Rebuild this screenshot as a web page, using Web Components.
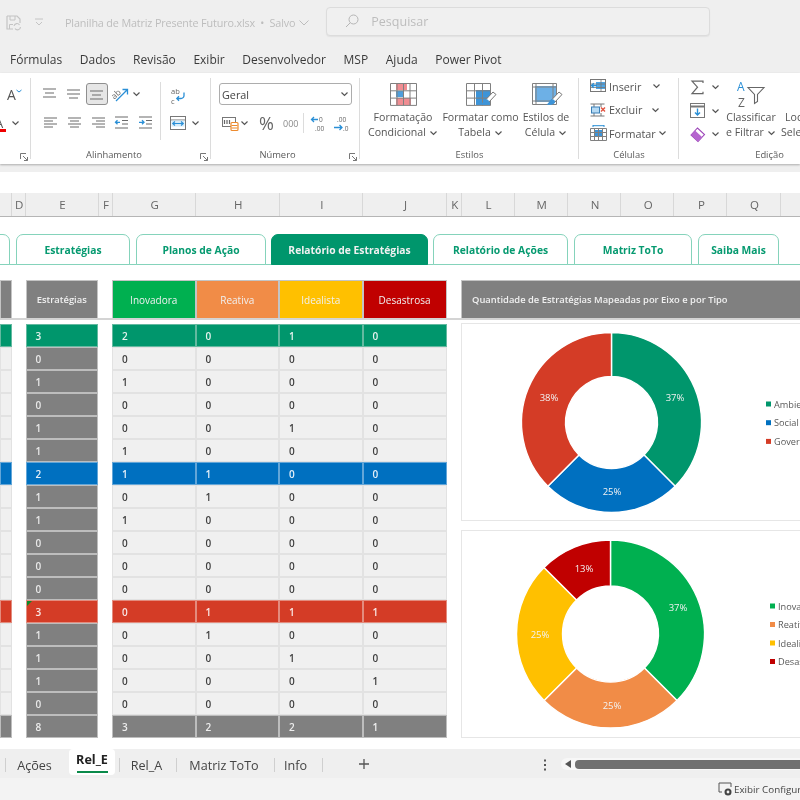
<!DOCTYPE html>
<html lang="pt-BR">
<head>
<meta charset="utf-8">
<title>Planilha de Matriz Presente Futuro</title>
<style>
  html, body { margin: 0; padding: 0; height: 100%; overflow: hidden; background: #efefef; }
  body { font-family: "Open Sans", "Liberation Sans", sans-serif; }
  x-app { --cols: 12px 13.5px 72.5px 14px 83.5px 83.5px 83.5px 84px 14.5px 1fr; }
</style>
</head>
<body>
<x-app></x-app>
<script>
const GR = '#6a6a6a', BL = '#2a8fd6', OR = '#ed8b2f';

// small helper for icons made of horizontal lines
const lines = (list, color = GR) =>
  `<path d="${list.map(l => `M${l[0]} ${l[2]}H${l[1]}`).join('')}" stroke="${color}" stroke-width="1.1" fill="none"/>`;
const svg = (w, h, body) =>
  `<svg width="${w}" height="${h}" viewBox="0 0 ${w} ${h}" overflow="visible" aria-hidden="true" style="flex:none">${body}</svg>`;
const chev = (w = 9) =>
  svg(w, 6, `<path d="M${w / 2 - 3} 1.5l3 3 3-3" stroke="#555" stroke-width="1.2" fill="none"/>`);

const brush = (x, y) => `
  <path d="M${x + 10} ${y - 9}l3 2.5-7.5 8-3-2.5z" fill="#fff" stroke="#777" stroke-width="1"/>
  <path d="M${x + 2} ${y - 1.5}c2.5-.8 4.5 1 4 2.8-1 2.6-5 3.2-8.5 2.2 2.2-.9 2.6-3.4 4.5-5z" fill="#3d94d8"/>`;
const gridLines = (x, y, w, h, cw, rh) => {
  let d = '';
  for (let i = 0; i <= w; i += cw) d += `M${x + i} ${y}v${h}`;
  for (let j = 0; j <= h; j += rh) d += `M${x} ${y + j}h${w}`;
  return `<path d="${d}" stroke="#808080" stroke-width="1" fill="none"/>`;
};

const ICONS = {
  alignTop: svg(16, 14, lines([[1, 14, 2], [3, 12, 6], [1, 14, 10]])),
  alignMid: svg(16, 14, lines([[1, 14, 3], [1, 14, 7], [3, 12, 11]])),
  alignBot: svg(16, 14, lines([[1, 14, 4], [3, 12, 8], [1, 14, 12]])),
  orient: svg(18, 16, `
    <text x="0" y="10" font-size="8.5" font-family="Open Sans" fill="#666" transform="rotate(-42 6 9)">ab</text>
    <path d="M4 15L15 4M10.5 3.5H15.5V8.5" stroke="${BL}" stroke-width="1.3" fill="none"/>`),
  left: svg(16, 14, lines([[2, 15, 2], [2, 11, 5], [2, 15, 8], [2, 11, 11]])),
  center: svg(16, 14, lines([[2, 15, 2], [4, 13, 5], [2, 15, 8], [4, 13, 11]])),
  right: svg(16, 14, lines([[2, 15, 2], [6, 15, 5], [2, 15, 8], [6, 15, 11]])),
  outdent: svg(16, 14, lines([[1, 14, 1], [8, 14, 4.5], [8, 14, 8], [1, 14, 12]]) +
    `<path d="M6 6.3H1.5M3.5 4.3l-2 2 2 2" stroke="${BL}" stroke-width="1.3" fill="none"/>`),
  indent: svg(16, 14, lines([[1, 14, 1], [8, 14, 4.5], [8, 14, 8], [1, 14, 12]]) +
    `<path d="M1 6.3H6M4 4.3l2 2-2 2" stroke="${BL}" stroke-width="1.3" fill="none"/>`),
  wrap: svg(18, 17, `
    <text x="2" y="7.5" font-size="7.5" font-family="Open Sans" fill="#666">ab</text>
    <text x="2" y="17.8" font-size="7.5" font-family="Open Sans" fill="#666">c</text>
    <path d="M15 6.5v3a3 3 0 0 1-3 3H8M10 10.3l-2.2 2.2 2.2 2.2" stroke="${BL}" stroke-width="1.3" fill="none"/>`),
  merge: svg(17, 15, `
    <rect x=".5" y=".5" width="15" height="13" fill="none" stroke="#777"/>
    <path d="M.5 4H15.5" stroke="#777"/><rect x="1.5" y="4.5" width="13" height="6" fill="#d6ebf8"/>
    <path d="M2.5 7.5h11M5 5.5l-2.3 2 2.3 2M11 5.5l2.3 2-2.3 2" stroke="${BL}" stroke-width="1.1" fill="none"/>`),
  acct: svg(17, 15, `
    <rect x=".5" y="1.5" width="13" height="9" fill="#fff" stroke="#777"/>
    <path d="M2.5 4v4M5 4v4M7.5 4v4" stroke="#666" stroke-width="1.2"/>
    <rect x="9" y="6.5" width="7" height="8" rx="1" fill="#fff" stroke="${OR}" stroke-width="1.2"/>
    <path d="M9.5 9.5h6M9.5 12h6" stroke="${OR}"/>`),
  decUp: svg(16, 17, `
    <text x="9" y="7" font-size="6.5" font-family="Open Sans" fill="#666">0</text>
    <text x="5" y="16" font-size="6.5" font-family="Open Sans" fill="#666">.00</text>
    <path d="M8 4.5H1.5M4 2L1.5 4.5 4 7" stroke="${BL}" stroke-width="1.3" fill="none"/>`),
  decDown: svg(16, 17, `
    <text x="4" y="7" font-size="6.5" font-family="Open Sans" fill="#666">.00</text>
    <text x="10" y="16" font-size="6.5" font-family="Open Sans" fill="#666">.0</text>
    <path d="M1 12.5H9M6.5 10L9 12.5 6.5 15" stroke="${BL}" stroke-width="1.3" fill="none"/>`),
  condFmt: svg(27, 23, `
    <rect x="6" y="1" width="11" height="6" fill="#f08d92"/><rect x="6" y="15" width="15" height="7" fill="#f08d92"/>
    <rect x="6" y="8" width="8" height="6" fill="#4e9fdc"/>
    ${gridLines(.5, .5, 26, 22, 6.5, 7.3)}`),
  tableFmt: svg(29, 24, `
    <rect x="10" y="7" width="15" height="15" fill="#3d94d8"/>
    ${gridLines(.5, .5, 24, 22, 8, 7.3)}${brush(17, 18)}`),
  cellFmt: svg(29, 24, `
    <rect x="3" y="3" width="22" height="16" fill="#6db0e6"/>
    <path d="M.5.5h24v21H.5zM.5 4h24M4 .5v21M21 .5v21M.5 18h24" stroke="#808080" fill="none"/>${brush(17, 18)}`),
  insert: svg(17, 14, `
    <rect x=".5" y=".5" width="15" height="12" fill="#fff" stroke="#777"/>
    <rect x="6" y="3" width="9" height="7" fill="#4ea6e6"/>
    <path d="M1 5h14M1 8.5h14M11 1v11" stroke="#777" stroke-width=".8"/>
    <path d="M7 6.5H1.5M3.8 4.2L1.5 6.5l2.3 2.3" stroke="${BL}" stroke-width="1.3" fill="none"/>`),
  del: svg(17, 14, `
    <path d="M.5 1h14M.5 13h14M4 1v12M11 1v3M11 10v3" stroke="#777" fill="none"/>
    <rect x="1.5" y="4" width="8" height="6" fill="#b6daf4" stroke="#3a7fb5"/>
    <path d="M11 4.5l4 4m0-4l-4 4" stroke="#e2533f" stroke-width="1.4"/>`),
  format: svg(17, 16, `
    <path d="M3 .7h11M3 0v2M14 0v2" stroke="${BL}"/>
    <rect x="4" y="5" width="9" height="7" fill="#3d94d8"/>
    ${gridLines(.5, 3.5, 16, 12, 4, 4)}`),
  sum: svg(15, 15, `<path d="M13 3V1.2H2l5.5 6L2 13.6h11V11.8" stroke="#666" stroke-width="1.2" fill="none"/>`),
  fill: svg(16, 15, `
    <rect x=".5" y=".5" width="14" height="14" fill="#fff" stroke="#777"/><path d="M.5 3.5h14" stroke="#777" stroke-width="2"/>
    <path d="M7.5 5.5V12M5 9.5L7.5 12 10 9.5" stroke="${BL}" stroke-width="1.4" fill="none"/>`),
  eraser: svg(16, 15, `
    <path d="M1 8l6.5-7 7 6.5L8 14.5z" fill="#fff" stroke="#9c45b8" stroke-width="1.1"/>
    <path d="M1 8l4-4.5 7 6.5-4 4.5z" fill="#b565cf"/>`),
  sort: svg(28, 26, `
    <text x="0" y="10" font-size="12" font-family="Open Sans" fill="${BL}">A</text>
    <text x="1" y="25.5" font-size="12" font-family="Open Sans" fill="#666">Z</text>
    <path d="M11 6.5h16l-6.5 7v7l-3 2v-9z" fill="#fff" stroke="#666" stroke-width="1.1"/>`),
  launcher: svg(8, 8, `<path d="M.5 6V.5H6M3 3l4.5 4.5M7.5 4v3.5H4" stroke="#777" fill="none"/>`),
};

class XTitlebar extends HTMLElement {
  constructor() {
    super();
    this.attachShadow({ mode: 'open' }).innerHTML = `
      <style>
        :host { display: flex; align-items: center; height: 41px; padding-left: 6px; box-sizing: border-box;
                color: #bdbdbd; font-size: 12px; white-space: nowrap; padding-top: 4px; }
        .qa { margin-left: 13px; line-height: 0; }
        .name { margin-left: 22px; font-size: 10.8px; letter-spacing: -.15px; }
        .dn { margin-left: 4px; line-height: 0; }
        .search { margin-left: 17px; width: 384px; height: 29px; box-sizing: border-box; display: flex; align-items: center;
                  border: 1px solid #dcdcdc; border-radius: 4px; box-shadow: 0 1px 1px #e2e2e2; background: #f0f0f0;
                  padding-left: 18px; gap: 12px; font-size: 12.5px; margin-top: -3px; flex: none; }
      </style>
      ${svg(16, 16, `<path d="M1 1h10l3 3v4M1 1v13h6" stroke="#c4c4c4" fill="none" stroke-width="1.2"/>
        <path d="M4 1v4h5V1M3.5 14V9.5H7" stroke="#c4c4c4" fill="none"/>
        <path d="M8 11a3 3 0 0 1 5.5-1M14.5 12a3 3 0 0 1-5.5 1.5" stroke="#c4c4c4" fill="none" stroke-width="1.1"/>`)}
      <span class="qa">${svg(8, 9, `<path d="M0 1h8M1 4l3 3 3-3" stroke="#c4c4c4" fill="none"/>`)}</span>
      <span class="name">Planilha de Matriz Presente Futuro.xlsx &nbsp;•&nbsp; Salvo</span>
      <span class="dn">${svg(10, 6, `<path d="M.5 .5l4.5 4.5L9.5 .5" stroke="#bdbdbd" fill="none"/>`)}</span>
      <div class="search">
        ${svg(14, 14, `<circle cx="8.5" cy="5.5" r="4.5" stroke="#b5b5b5" fill="none"/><path d="M5.3 8.7L1 13" stroke="#b5b5b5"/>`)}
        <span>Pesquisar</span>
      </div>`;
  }
}

class XMenubar extends HTMLElement {
  constructor() {
    super();
    const items = ['Fórmulas', 'Dados', 'Revisão', 'Exibir', 'Desenvolvedor', 'MSP', 'Ajuda', 'Power Pivot'];
    this.attachShadow({ mode: 'open' }).innerHTML = `
      <style>
        :host { display: flex; align-items: center; gap: 17.6px; height: 32px; padding: 4px 0 0 10px; box-sizing: border-box;
                font-size: 12px; color: #3a3a3a; white-space: nowrap; }
      </style>
      ${items.map(t => `<span>${t}</span>`).join('')}`;
  }
}

class XRibbonGroup extends HTMLElement {
  constructor() {
    super();
    const launcher = this.hasAttribute('launcher') ? `<span class="launch">${ICONS.launcher}</span>` : '';
    const pad = this.getAttribute('label-pad') || 0;
    this.attachShadow({ mode: 'open' }).innerHTML = `
      <style>
        :host { display: flex; flex-direction: column; position: relative; height: 91px; box-sizing: border-box; flex: none; }
        :host(:not([last]))::after { content: ""; position: absolute; right: 0; top: 5px; bottom: 5px; width: 1px; background: #dcdcdc; }
        .body { flex: 1; min-height: 0; }
        .label { height: 14px; line-height: 14px; margin-bottom: 2px; text-align: center; font-size: 9.4px; color: #5a5a5a; padding-right: ${pad}px; }
        .launch { position: absolute; right: 3px; bottom: 3px; line-height: 0; }
      </style>
      <div class="body"><slot></slot></div>
      <div class="label">${this.getAttribute('label') || ''}</div>
      ${launcher}`;
  }
}

class XRibbon extends HTMLElement {
  constructor() {
    super();
    const big = (icon, a, b, w, extra = '', iconH = 27) => `
      <div class="big" style="width:${w}px;${extra}"><div class="bi" style="height:${iconH}px">${ICONS[icon]}</div><div class="ln">${a}</div><div class="ln">${b}</div></div>`;
    const cell = (name, w = 24) => `<span class="c" style="width:${w}px">${ICONS[name]}</span>`;
    const cellRow = (icon, text, gap) => `
      <div class="rowc"><span class="ci">${ICONS[icon]}</span><span>${text}</span><span class="ch" style="margin-left:${gap}px">${chev()}</span></div>`;
    const edit = (icon, gap = 2) => `
      <div class="rowe"><span class="ci">${ICONS[icon]}</span><span class="ch" style="margin-left:${gap}px">${chev()}</span></div>`;
    this.attachShadow({ mode: 'open' }).innerHTML = `
      <style>
        :host { display: flex; height: 91px; background: #fff; box-shadow: 0 1px 2px rgba(0,0,0,.28); position: relative;
                font-size: 10.6px; color: #555; white-space: nowrap; overflow: hidden; }
        .row { display: flex; align-items: center; height: 22px; }
        .c { display: flex; align-items: center; justify-content: center; height: 22px; box-sizing: border-box; flex: none; }
        .ch { display: flex; align-items: center; }
        .sel { background: #e6e6e6; border: 1px solid #8f8f8f; border-radius: 3px; }
        .rows { display: flex; flex-direction: column; gap: 7px; padding-top: 10px; }
        .al { display: flex; }
        .vs { width: 1px; background: #dcdcdc; height: 58px; margin: 9px 0 0 2px; }
        .select { width: 133px; height: 22px; box-sizing: border-box; border: 1px solid #adadad; border-radius: 3px; display: flex;
                  align-items: center; justify-content: space-between; padding: 0 2px 0 2px; font-size: 10.8px; color: #444; margin-left: 8px; }
        .big { display: flex; flex-direction: column; align-items: center; line-height: 15px; font-size: 10.6px; color: #555; flex: none; }
        .ln { display: flex; align-items: center; gap: 3px; }
        .bi { display: flex; justify-content: center; line-height: 0; }
        .bigs { display: flex; padding: 10px 0 0 3px; }
        .rowc { display: flex; align-items: center; height: 23.5px; font-size: 10.8px; }
        .rowe { display: flex; align-items: center; height: 23.5px; }
        .ci { display: flex; width: 19px; flex: none; }
        .stack { padding: 1.5px 0 0 11px; }
        .pct { font-size: 18px; color: #666; line-height: 22px; }
        .k { font-size: 9px; color: #8a8a8a; }
        .redA { position: relative; font-size: 13px; color: #555; line-height: 16px; }
        .bar { display: block; height: 3px; background: #e00; width: 7px; margin-top: -2px; }
        .edit { display: flex; }
      </style>
      <x-ribbon-group label="" launcher style="width:31px">
        <div class="rows">
          <div class="row" style="padding-left:7px"><span style="font-size:14px;color:#555">A</span>${svg(6, 14, `<path d="M.5 3l2.5 2 2.5-2" stroke="${BL}" fill="none"/>`)}</div>
          <div class="row"><span class="redA" style="width:11px;overflow:hidden;margin-left:-5px"><span>A</span><span class="bar" style="margin-left:0;width:11px"></span></span><span class="ch" style="margin-left:5px">${chev()}</span></div>
        </div>
      </x-ribbon-group>

      <x-ribbon-group label="Alinhamento" label-pad="14" launcher style="width:180px">
        <div class="al" style="padding-left:7px">
          <div class="rows">
            <div class="row">${cell('alignTop')}${cell('alignMid')}<span class="c sel" style="width:22px">${ICONS.alignBot}</span><span style="width:2px"></span>${cell('orient', 22)}${chev()}</div>
            <div class="row">${cell('left')}${cell('center')}${cell('right')}${cell('outdent')}${cell('indent')}</div>
          </div>
          <div class="vs"></div>
          <div class="rows" style="padding-left:7px">
            <div class="row">${cell('wrap', 20)}</div>
            <div class="row">${cell('merge', 20)}<span class="ch" style="margin-left:3px">${chev()}</span></div>
          </div>
        </div>
      </x-ribbon-group>

      <x-ribbon-group label="Número" label-pad="16" launcher style="width:149px">
        <div class="rows">
          <div class="select"><span>Geral</span>${chev()}</div>
          <div class="row" style="padding-left:10px">
            ${cell('acct', 18)}<span class="ch" style="margin:0 10px 0 1px">${chev()}</span>
            <span class="pct" style="width:24px">%</span><span class="k" style="width:20px">000</span>
            <span style="width:1px;height:20px;background:#dcdcdc;margin-right:5px"></span>
            ${cell('decUp', 17)}<span style="width:6px"></span>${cell('decDown', 17)}
          </div>
        </div>
      </x-ribbon-group>

      <x-ribbon-group label="Estilos" style="width:219px">
        <div class="bigs">
          ${big('condFmt', 'Formatação', `Condicional ${chev()}`, 80)}
          ${big('tableFmt', 'Formatar como', `Tabela ${chev()}`, 75)}
          ${big('cellFmt', 'Estilos de', `Célula ${chev()}`, 56)}
        </div>
      </x-ribbon-group>

      <x-ribbon-group label="Células" style="width:100px">
        <div class="stack">
          ${cellRow('insert', 'Inserir', 11)}
          ${cellRow('del', 'Excluir', 9)}
          ${cellRow('format', 'Formatar', 2)}
        </div>
      </x-ribbon-group>

      <x-ribbon-group label="Edição" last style="width:170px;padding-left:11px">
        <div class="edit">
          <div style="padding-top:2.5px;width:36px">
            ${edit('sum')}${edit('fill')}${edit('eraser')}
          </div>
          ${big('sort', 'Classificar', `e Filtrar ${chev()}`, 50, 'margin-top:8px', 29)}
          <div class="big" style="width:40px;align-items:flex-start;margin:10px 0 0 7px">
            <div class="bi" style="height:27px"></div><div style="padding-left:2px">Localizar e</div><div style="margin-left:-2px">Selecionar</div>
          </div>
        </div>
      </x-ribbon-group>`;
  }
}

class XFormula extends HTMLElement {
  constructor() {
    super();
    this.attachShadow({ mode: 'open' }).innerHTML = `
      <style>:host { display: block; height: 21px; margin-top: 8px; background: #fff; }</style>`;
  }
}

class XColHeads extends HTMLElement {
  constructor() {
    super();
    const c = [['', 12], ['D', 13.5], ['E', 73], ['F', 14], ['G', 83.5], ['H', 83.5], ['I', 83.5], ['J', 84], ['K', 14.5],
      ['L', 53.2], ['M', 53.2], ['N', 53.2], ['O', 53.2], ['P', 53.2], ['Q', 53.2], ['', 30]];
    this.attachShadow({ mode: 'open' }).innerHTML = `
      <style>
        :host { display: flex; height: 24px; box-sizing: border-box; background: #efefef; border-bottom: 1px solid #b5b5b5;
                color: #666; font-size: 11.5px; }
        span { flex: none; box-sizing: border-box; border-right: 1px solid #d8d8d8; text-align: center; line-height: 23px; padding-left: 2px; }
      </style>
      ${c.map(([t, w]) => `<span style="width:${w}px">${t}</span>`).join('')}`;
  }
}

class XNavTabs extends HTMLElement {
  constructor() {
    super();
    const tabs = [['', -30, 40], ['Estratégias', 16, 114], ['Planos de Ação', 136, 130], ['Relatório de Estratégias', 271, 157],
      ['Relatório de Ações', 433, 135], ['Matriz ToTo', 574, 118], ['Saiba Mais', 698, 81]];
    let x = 0;
    const html = tabs.map(([t, l, w], i) => {
      const m = l - x; x = l + w;
      return `<div class="tab${i === 3 ? ' on' : ''}" style="margin-left:${m}px;width:${w}px">${t}</div>`;
    }).join('');
    this.attachShadow({ mode: 'open' }).innerHTML = `
      <style>
        :host { display: flex; height: 31px; box-sizing: border-box; border-bottom: 1.5px solid #85d3bb; }
        .tab { flex: none; box-sizing: border-box; height: 31px; border: 1.5px solid #85d3bb; border-radius: 7px 7px 0 0;
               display: flex; align-items: center; justify-content: center; font-size: 10.3px; font-weight: 700; color: #069a70;
               background: #fff; white-space: nowrap; }
        .on { background: #00966c; border-color: #00966c; color: #f1f1f1; }
      </style>
      ${html}`;
  }
}

class XDonut extends HTMLElement {
  connectedCallback() {
    const cx = +this.getAttribute('cx'), cy = +this.getAttribute('cy');
    const r = +this.getAttribute('r'), ir = +this.getAttribute('ir');
    const lx = +this.getAttribute('lx');
    const lgap = +this.getAttribute('lgap'), ly = +this.getAttribute('ly');
    const data = JSON.parse(this.getAttribute('data'));
    const pt = (rad, a) => [cx + rad * Math.sin(a), cy - rad * Math.cos(a)];
    let a0 = 0, arcs = '', labels = '', legend = '';
    data.forEach((d, i) => {
      const a1 = a0 + d.v * 2 * Math.PI;
      const [x0, y0] = pt(r, a0), [x1, y1] = pt(r, a1), [x2, y2] = pt(ir, a1), [x3, y3] = pt(ir, a0);
      const large = d.v > .5 ? 1 : 0;
      arcs += `<path d="M${x0} ${y0}A${r} ${r} 0 ${large} 1 ${x1} ${y1}L${x2} ${y2}A${ir} ${ir} 0 ${large} 0 ${x3} ${y3}Z"
        fill="${d.c}" stroke="#fff" stroke-width="1.4"/>`;
      labels += `<text x="${d.x}" y="${d.y}" text-anchor="middle" dominant-baseline="central" font-size="9.5" fill="#f2f2f2">${d.p}</text>`;
      const ty = ly + i * lgap;
      legend += `<rect x="${lx}" y="${ty - 2.5}" width="5" height="5" fill="${d.c}"/>
        <text x="${lx + 8}" y="${ty}" dominant-baseline="central" font-size="9.2" fill="#595959">${d.t}</text>`;
      a0 = a1;
    });
    this.attachShadow({ mode: 'open' }).innerHTML = `
      <style>
        :host { display: block; box-sizing: border-box; border: 1px solid #e6e6e6; background: #fff; margin-right: -8px; }
        svg { display: block; width: 100%; height: 100%; font-family: "Open Sans", "Liberation Sans", sans-serif; }
      </style>
      <svg>${arcs}${labels}${legend}</svg>`;
  }
}

class XReport extends HTMLElement {
  constructor() {
    super();
    const e = [3, 0, 1, 0, 1, 1, 2, 1, 1, 0, 0, 0, 3, 1, 1, 1, 0, 8];
    const g = [2, 0, 1, 0, 0, 1, 1, 0, 1, 0, 0, 0, 0, 0, 0, 0, 0, 3];
    const h = [0, 0, 0, 0, 0, 0, 1, 1, 0, 0, 0, 0, 1, 1, 0, 0, 0, 2];
    const i = [1, 0, 0, 0, 1, 0, 0, 0, 0, 0, 0, 0, 1, 0, 1, 0, 0, 2];
    const j = [0, 0, 0, 0, 0, 0, 0, 0, 0, 0, 0, 0, 1, 0, 0, 1, 0, 1];
    const rowClass = n => ({ 0: 'gn', 6: 'bl', 12: 'rd', 17: 'tt' })[n] || '';
    const blank = e.map(() => ''); // part of column C, cut by the window
    const col = (vals, base) => `<div class="col">${vals.map((v, n) =>
      `<div class="cell ${rowClass(n) || base}">${n === 12 && base === 'gy' ? '<i class="tri"></i>' : ''}${v}</div>`).join('')}</div>`;
    this.attachShadow({ mode: 'open' }).innerHTML = `
      <style>
        :host { display: block; font-size: 10px; }
        .head, .body { display: grid; grid-template-columns: var(--cols); }
        .head { margin-top: 15px; height: 40px; box-sizing: border-box; border-bottom: 2px solid #d4d4d4; }
        .body { margin-top: 4px; }
        .h { height: 38px; box-sizing: border-box; display: flex; align-items: center; justify-content: center; color: #f0f0f0;
             border: 1px solid #c4c4c4; border-width: 1px 1px 0 1px; font-size: 10px; }
        .gh { background: #808080; font-weight: 600; font-size: 9.4px; }
        .title { grid-column: 10; background: #808080; justify-content: flex-start; padding-left: 10px; font-weight: 600; font-size: 9.4px; border-right: 0; white-space: nowrap; }
        .col { display: flex; flex-direction: column; }
        .cell { height: 23px; box-sizing: border-box; border: 1px solid #e2e2e2; background: #f0f0f0; padding-left: 9px; line-height: 22px;
                color: #404040; font-weight: 600; font-size: 10px; position: relative; }
        .gy { background: #808080; color: #e8e8e8; border-color: #bdbdbd; }
        .gn { background: #00966c; color: #e6f2ee; border-color: #63b9a0; }
        .bl { background: #0070c0; color: #e6f0f8; border-color: #63a6d8; }
        .rd { background: #d43c26; color: #f8e8e6; border-color: #e38c7e; }
        .tt { background: #808080; color: #eee; border-color: #bdbdbd; }
        .tri { position: absolute; left: 0; top: 0; width: 0; height: 0; border-top: 5px solid #0a8a2a; border-right: 5px solid transparent; }
        .panel { grid-column: 10; display: flex; flex-direction: column; gap: 9px; margin-top: -1px; min-width: 0; }
      </style>
      <div class="head">
        <div class="h gh"></div><div></div>
        <div class="h gh">Estratégias</div><div></div>
        <div class="h" style="background:#00b050">Inovadora</div>
        <div class="h" style="background:#f18c47">Reativa</div>
        <div class="h" style="background:#ffc000">Idealista</div>
        <div class="h" style="background:#c00000">Desastrosa</div>
        <div></div>
        <div class="h title">Quantidade de Estratégias Mapeadas por Eixo e por Tipo</div>
      </div>
      <div class="body">
        ${col(blank, '')}<div></div>
        ${col(e, 'gy')}<div></div>
        ${col(g, '')}${col(h, '')}${col(i, '')}${col(j, '')}<div></div>
        <div class="panel">
          <x-donut style="height:198px" cx="149.5" cy="98.5" r="90" ir="46" lx="304" ly="80" lgap="18.7"
            data='[{"v":0.375,"c":"#00966c","p":"37%","x":213,"y":73,"t":"Ambiental"},
                   {"v":0.25,"c":"#0070c0","p":"25%","x":150,"y":167,"t":"Social"},
                   {"v":0.375,"c":"#d43c26","p":"38%","x":87,"y":73,"t":"Governança"}]'></x-donut>
          <x-donut style="height:208px" cx="148.5" cy="103" r="94" ir="48" lx="308" ly="75" lgap="18.5"
            data='[{"v":0.375,"c":"#00b050","p":"37%","x":216,"y":76,"t":"Inovadora"},
                   {"v":0.25,"c":"#f18c47","p":"25%","x":150,"y":174,"t":"Reativa"},
                   {"v":0.25,"c":"#ffc000","p":"25%","x":78,"y":103,"t":"Idealista"},
                   {"v":0.125,"c":"#c00000","p":"13%","x":122,"y":37,"t":"Desastrosa"}]'></x-donut>
        </div>
      </div>`;
  }
}

class XSheet extends HTMLElement {
  constructor() {
    super();
    this.attachShadow({ mode: 'open' }).innerHTML = `
      <style>
        :host { display: block; height: 532px; background: #fff; padding-top: 17px; box-sizing: border-box; overflow: hidden; }
      </style>
      <x-nav-tabs></x-nav-tabs>
      <x-report></x-report>`;
  }
}

class XSheetTabs extends HTMLElement {
  constructor() {
    super();
    this.attachShadow({ mode: 'open' }).innerHTML = `
      <style>
        :host { display: flex; height: 29px; background: #efefef; font-size: 12.6px; color: #444; white-space: nowrap; align-items: flex-start; }
        .t { flex: none; box-sizing: border-box; height: 14px; margin-top: 9px; padding-right: 3px; border-left: 1px solid #cfcfcf; display: flex; align-items: center; justify-content: center; }
        .on { flex: none; width: 46px; height: 26px; margin-left: 4px; background: #fff; border-radius: 4px; font-weight: 700; color: #222; text-align: center; line-height: 22px;
              position: relative; }
        .on::after { content: ""; position: absolute; left: 8px; right: 7px; top: 22px; height: 1.5px; background: #0a8a4a; }
        .plus { flex: none; width: 12px; margin: 9px 0 0 35px; line-height: 0; }
        .dots { margin: 10px 0 0 173px; line-height: 0; flex: none; }
        .track { flex: none; margin: 9px 0 0 14px; width: 260px; height: 12px; background: #f7f7f7; border-radius: 6px; display: flex; align-items: center; padding-left: 4px; gap: 4px; }
        .thumb { flex: 1; height: 9px; background: #707070; border-radius: 4px; }
      </style>
      <span class="t" style="margin-left:5px;width:60px;padding-right:2px">Ações</span>
      <span class="on">Rel_E</span>
      <span class="t" style="margin-left:4px;width:57px">Rel_A</span>
      <span class="t" style="width:98px">Matriz ToTo</span>
      <span class="t" style="width:49px;padding-right:6px;border-right:1px solid #cfcfcf">Info</span>
      <span class="plus">${svg(12, 12, `<path d="M6 1v10M1 6h10" stroke="#555" stroke-width="1.3"/>`)}</span>
      <span class="dots">${svg(4, 12, `<path d="M2 .5v2M2 5v2M2 9.5v2" stroke="#555" stroke-width="2"/>`)}</span>
      <div class="track">
        ${svg(6, 8, `<path d="M6 0v8L0 4z" fill="#555"/>`)}
        <div class="thumb"></div>
      </div>`;
  }
}

class XStatus extends HTMLElement {
  constructor() {
    super();
    this.attachShadow({ mode: 'open' }).innerHTML = `
      <style>
        :host { display: flex; height: 22px; align-items: center; background: #f3f3f3; color: #444; font-size: 9.8px;
                padding-left: 718px; gap: 2px; white-space: nowrap; overflow: hidden; }
        span { flex: none; }
      </style>
      ${svg(14, 14, `<path d="M4 10H1V1h12v4" stroke="#555" fill="none"/><circle cx="10" cy="10" r="3.5" fill="#444"/><circle cx="10" cy="10" r="1.4" fill="#f3f3f3"/>`)}
      <span>Exibir Configurações</span>`;
  }
}

class XApp extends HTMLElement {
  constructor() {
    super();
    this.attachShadow({ mode: 'open' }).innerHTML = `
      <style>
        :host { display: block; width: 800px; height: 800px; overflow: hidden; background: #efefef; filter: blur(.3px); }
      </style>
      <x-titlebar></x-titlebar>
      <x-menubar></x-menubar>
      <x-ribbon></x-ribbon>
      <x-formula></x-formula>
      <x-col-heads></x-col-heads>
      <x-sheet></x-sheet>
      <x-sheet-tabs></x-sheet-tabs>
      <x-status></x-status>`;
  }
}

customElements.define('x-ribbon-group', XRibbonGroup);
customElements.define('x-titlebar', XTitlebar);
customElements.define('x-menubar', XMenubar);
customElements.define('x-ribbon', XRibbon);
customElements.define('x-formula', XFormula);
customElements.define('x-col-heads', XColHeads);
customElements.define('x-nav-tabs', XNavTabs);
customElements.define('x-donut', XDonut);
customElements.define('x-report', XReport);
customElements.define('x-sheet', XSheet);
customElements.define('x-sheet-tabs', XSheetTabs);
customElements.define('x-status', XStatus);
customElements.define('x-app', XApp);
</script>
</body>
</html>
